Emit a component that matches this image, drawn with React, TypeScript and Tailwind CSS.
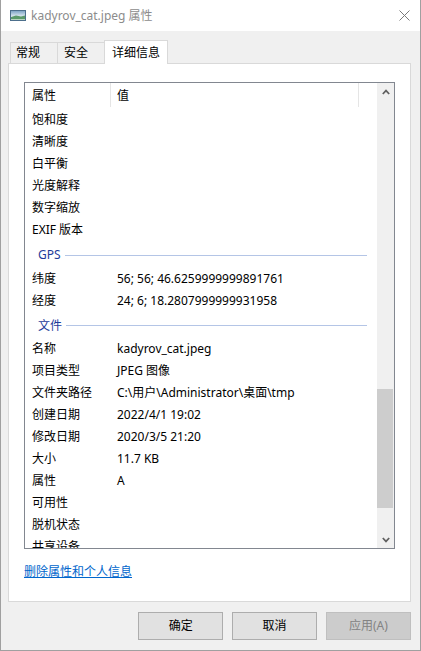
const rowsTop: [string, string][] = [
  ["饱和度", ""],
  ["清晰度", ""],
  ["白平衡", ""],
  ["光度解释", ""],
  ["数字缩放", ""],
  ["EXIF 版本", ""],
];

const gpsRows: [string, string][] = [
  ["纬度", "56; 56; 46.6259999999891761"],
  ["经度", "24; 6; 18.2807999999931958"],
];

const fileRows: [string, string][] = [
  ["名称", "kadyrov_cat.jpeg"],
  ["项目类型", "JPEG 图像"],
  ["文件夹路径", "C:\\用户\\Administrator\\桌面\\tmp"],
  ["创建日期", "2022/4/1 19:02"],
  ["修改日期", "2020/3/5 21:20"],
  ["大小", "11.7 KB"],
  ["属性", "A"],
  ["可用性", ""],
  ["脱机状态", ""],
  ["共享设备", ""],
];

function Row({ name, value }: { name: string; value: string }) {
  return (
    <div className="flex h-[22px] shrink-0 items-center whitespace-nowrap">
      <div className="w-[92px] pl-[7px]">{name}</div>
      <div>{value}</div>
    </div>
  );
}

function Group({ title }: { title: string }) {
  return (
    <div className="flex h-[26.5px] shrink-0 items-center pl-[13px] pr-[10px] pt-[2px]">
      <span className="text-[#1e3c9a]">{title}</span>
      <div className="ml-[4px] h-px flex-1 bg-[#b4c5e6]" />
    </div>
  );
}

function Chevron({ up }: { up?: boolean }) {
  return (
    <svg width="8" height="6" viewBox="0 0 8 6">
      <path
        d={up ? "M0.8 5 L4 1.6 L7.2 5" : "M0.8 1 L4 4.4 L7.2 1"}
        fill="none"
        stroke="#606060"
        strokeWidth="1.7"
      />
    </svg>
  );
}

function FileIcon() {
  return (
    <svg width="16" height="11" viewBox="0 0 16 11">
      <defs>
        <linearGradient id="sky" x1="0" y1="0" x2="0" y2="1">
          <stop offset="0" stopColor="#7fa6c6" />
          <stop offset="1" stopColor="#e8f0f6" />
        </linearGradient>
      </defs>
      <rect x="0" y="0" width="16" height="11" fill="#4d6f8c" />
      <rect x="1" y="1" width="14" height="6" fill="url(#sky)" />
      <path d="M1 7 L6 5.5 L11 6.5 L15 5.5 L15 10 L1 10 Z" fill="#5b9a6a" />
      <rect x="1" y="9" width="14" height="1" fill="#b9d6c0" />
    </svg>
  );
}

export default function App() {
  return (
    <div className="flex h-[651px] w-[421px] flex-col border-b border-l border-r border-[#a0a0a0] bg-[#f0f0f0] font-['Noto_Sans','Noto_Sans_CJK_SC',sans-serif] text-[12px] text-black">
      {/* title bar */}
      <div className="flex h-[31px] shrink-0 items-center bg-white pl-[9px] pr-[10px]">
        <FileIcon />
        <span className="ml-[5px] text-[#8c8c8c]">kadyrov_cat.jpeg 属性</span>
        <svg className="ml-auto" width="11" height="11" viewBox="0 0 11 11">
          <path d="M0.5 0.5 L10.5 10.5 M10.5 0.5 L0.5 10.5" stroke="#7a7a7a" strokeWidth="1" />
        </svg>
      </div>

      <div className="flex flex-1 flex-col pl-[7px] pr-[9px] pt-[9px]">
        {/* tabs */}
        <div className="flex h-[23px] items-end pl-[2px]">
          <div className="flex h-[21px] w-[48px] items-center border border-b-0 border-[#d9d9d9] pl-[5px]">常规</div>
          <div className="-ml-px flex h-[21px] w-[48px] items-center border border-b-0 border-[#d9d9d9] pl-[6px]">安全</div>
          <div className="relative z-10 -mb-px -ml-px flex h-[24px] w-[64px] items-center border border-b-0 border-[#d9d9d9] bg-white pl-[7px]">
            详细信息
          </div>
        </div>

        {/* panel */}
        <div className="h-[539px] border border-[#d9d9d9] bg-white pl-[15px] pt-[18px]">
          <div className="flex h-[467px] w-[371px] border border-[#828790]">
            <div className="flex flex-1 flex-col overflow-hidden">
              <div className="flex h-[26px] shrink-0 items-center pb-[1px]">
                <div className="w-[85px] pl-[7px]">属性</div>
                <div className="h-[24px] w-px self-start bg-[#e5e5e5]" />
                <div className="w-[247px] pl-[6px]">值</div>
                <div className="h-[24px] w-px self-start bg-[#e5e5e5]" />
              </div>
              {rowsTop.map(([n, v]) => (
                <Row key={n} name={n} value={v} />
              ))}
              <Group title="GPS" />
              {gpsRows.map(([n, v]) => (
                <Row key={n} name={n} value={v} />
              ))}
              <Group title="文件" />
              {fileRows.map(([n, v]) => (
                <Row key={n} name={n} value={v} />
              ))}
            </div>
            <div className="flex w-[17px] flex-col bg-[#f0f0f0]">
              <div className="flex h-[17px] items-center justify-center">
                <Chevron up />
              </div>
              <div className="flex-1">
                <div className="mt-[289px] h-[119px] w-[16px] bg-[#cdcdcd]" />
              </div>
              <div className="flex h-[17px] items-center justify-center">
                <Chevron />
              </div>
            </div>
          </div>
          <div className="mt-[14px] leading-[17px]">
            <span className="text-[#0066cc] underline">删除属性和个人信息</span>
          </div>
        </div>

        {/* buttons */}
        <div className="ml-[130px] mt-[10px] flex gap-[8.5px]">
          <button className="h-[28px] w-[86px] border border-[#adadad] bg-[#e1e1e1]">确定</button>
          <button className="h-[28px] w-[86px] border border-[#adadad] bg-[#e1e1e1]">取消</button>
          <button className="h-[28px] w-[86px] border border-[#bfbfbf] bg-[#cccccc] text-[#838383]">应用(A)</button>
        </div>
      </div>
    </div>
  );
}
